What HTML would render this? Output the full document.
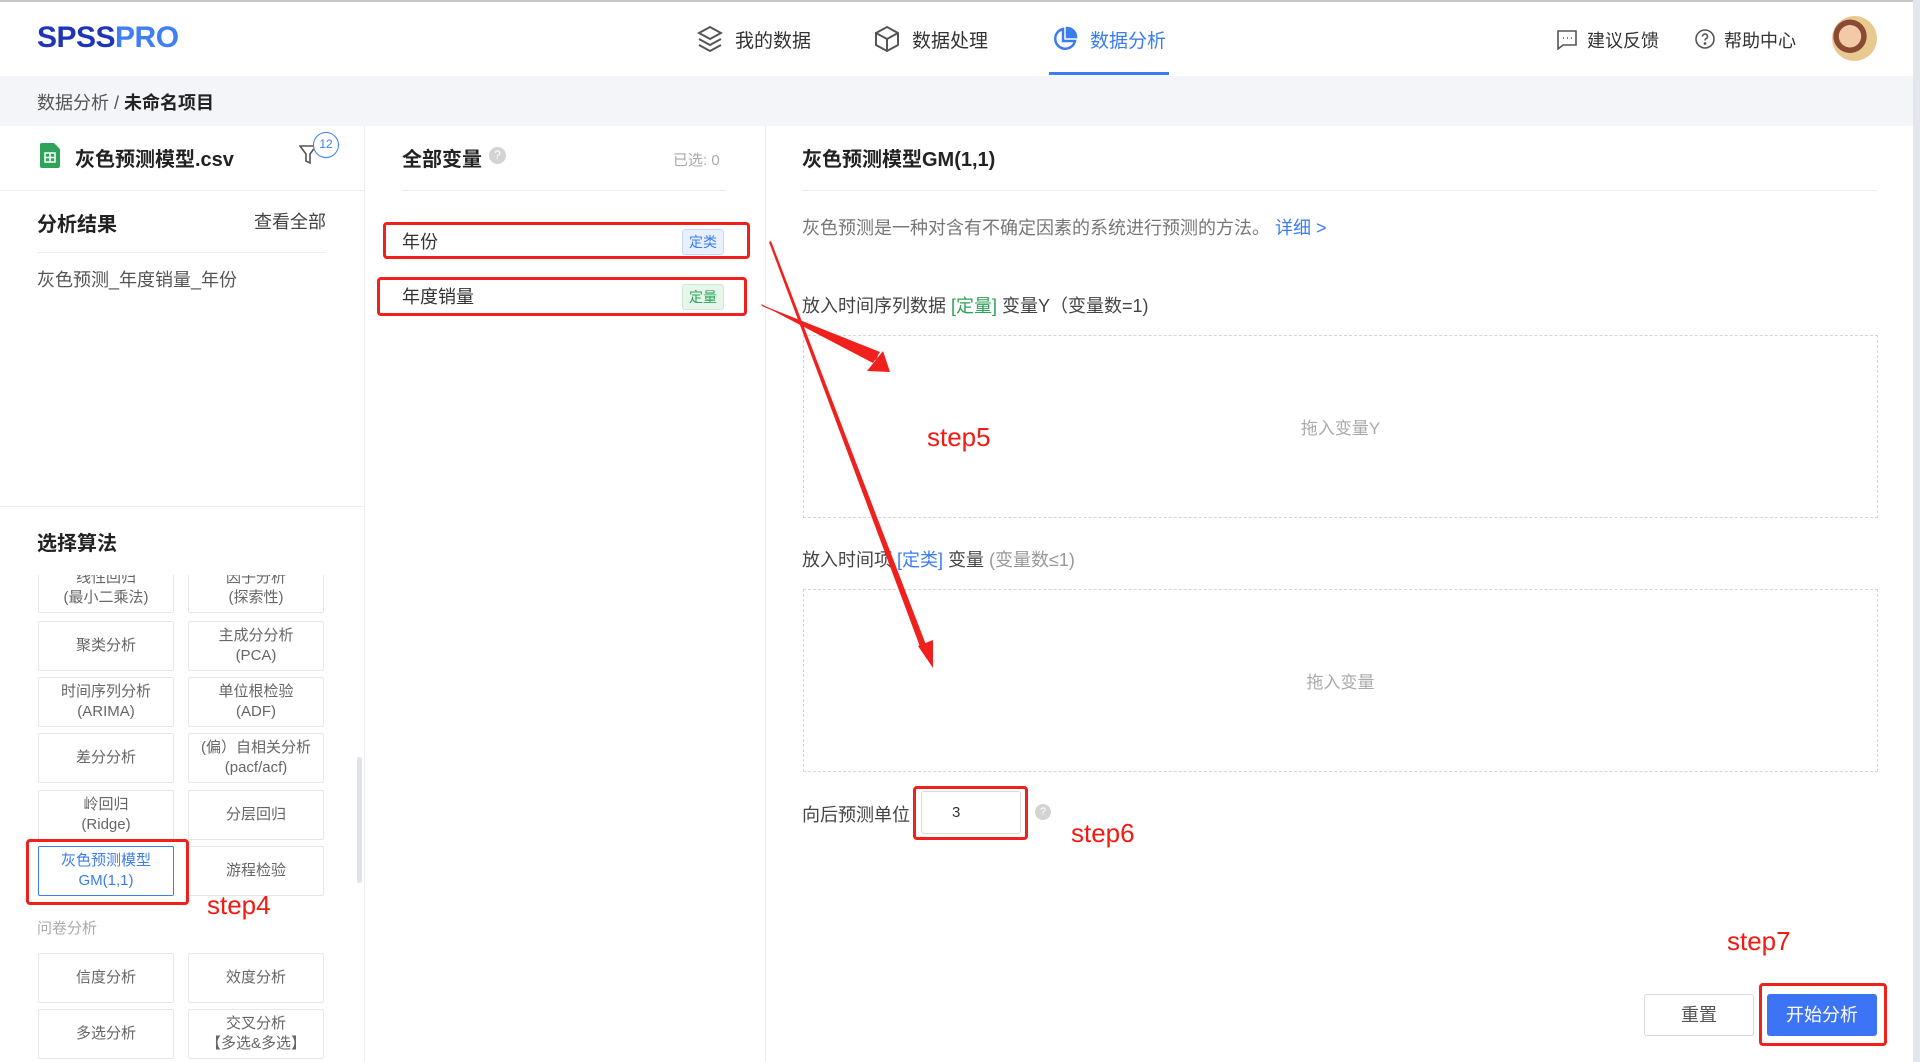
<!DOCTYPE html>
<html><head><meta charset="utf-8"><style>
*{margin:0;padding:0;box-sizing:border-box}
body{width:1920px;height:1062px;overflow:hidden;background:#fff;font-family:"Liberation Sans","Noto Sans CJK SC",sans-serif;color:#333;position:relative}
.a{position:absolute;white-space:nowrap}
.b{font-weight:bold;color:#222}
.cell{position:absolute;width:136px;height:50px;border:1px solid #e4e6ea;border-radius:2px;font-size:15px;color:#666;display:flex;align-items:center;justify-content:center;text-align:center;line-height:20px;background:#fff}
.red{position:absolute;border:3px solid #f0201c;border-radius:4px}
.step{position:absolute;color:#f21b14;font-size:26px;font-family:"Liberation Sans",sans-serif}
.dash{position:absolute;border:1px dashed #d4d6da;display:flex;align-items:center;justify-content:center;color:#aaa;font-size:17px}
.tag{position:absolute;font-size:14px;padding:2px 6px;border-radius:3px}
</style></head><body>
<div class="a" style="left:0;top:0;width:1920px;height:2px;background:#c8c8c8"></div>
<div class="a" style="left:37px;top:21px;font-size:30px;font-weight:bold;color:#1f35b8;letter-spacing:-0.5px">SPSS<span style="color:#3f7ef5">PRO</span></div>
<!-- nav -->
<svg class="a" style="left:697px;top:25px" width="26" height="28" viewBox="0 0 26 28" fill="none" stroke="#555" stroke-width="2"><path d="M13 2L24 8L13 14L2 8Z"/><path d="M2 14L13 20L24 14"/><path d="M2 20L13 26L24 20"/></svg>
<div class="a" style="left:735px;top:26px;font-size:19px;color:#333">我的数据</div>
<svg class="a" style="left:874px;top:25px" width="26" height="28" viewBox="0 0 26 28" fill="none" stroke="#555" stroke-width="2"><path d="M13 2L24 8V20L13 26L2 20V8Z"/><path d="M2 8L13 14L24 8M13 14V26"/></svg>
<div class="a" style="left:912px;top:26px;font-size:19px;color:#333">数据处理</div>
<svg class="a" style="left:1052px;top:26px" width="26" height="26" viewBox="0 0 26 26" fill="none" stroke="#3b7cf0" stroke-width="2.5"><path d="M11 3A10 10 0 1 0 23 15H11Z"/><path d="M15 2V11H24A9 9 0 0 0 15 2Z" fill="#3b7cf0"/></svg>
<div class="a" style="left:1090px;top:26px;font-size:19px;color:#3b7cf0">数据分析</div>
<div class="a" style="left:1049px;top:72px;width:120px;height:3px;background:#3b7cf0"></div>
<svg class="a" style="left:1557px;top:30px" width="20" height="20" viewBox="0 0 20 20" fill="none" stroke="#555" stroke-width="1.6"><path d="M1 1H19V15H6L1 19Z"/><path d="M6 8h1M10 8h1M14 8h1"/></svg>
<div class="a" style="left:1587px;top:27px;font-size:18px;color:#333">建议反馈</div>
<svg class="a" style="left:1695px;top:29px" width="20" height="20" viewBox="0 0 20 20" fill="none" stroke="#555" stroke-width="1.6"><circle cx="10" cy="10" r="9"/><path d="M7.5 7.5a2.5 2.5 0 1 1 3.5 2.3c-.8.4-1 .9-1 1.7"/><circle cx="10" cy="14.5" r=".6" fill="#555"/></svg>
<div class="a" style="left:1724px;top:27px;font-size:18px;color:#333">帮助中心</div>
<div class="a" style="left:1832px;top:16px;width:45px;height:45px;border-radius:50%;background:radial-gradient(circle at 40% 45%,#f3c9a8 0 30%,#8a4a35 31% 45%,#e8c98f 46%)"></div>
<div class="a" style="left:1913px;top:0;width:7px;height:1062px;background:#e3e6ec"></div>
<!-- breadcrumb -->
<div class="a" style="left:0;top:76px;width:1913px;height:50px;background:#f4f5f8"></div>
<div class="a" style="left:37px;top:89px;font-size:18px;color:#555">数据分析 / <b style="color:#222">未命名项目</b></div>
<!-- panels -->
<div class="a" style="left:364px;top:126px;width:1px;height:936px;background:#eceef1"></div>
<div class="a" style="left:765px;top:126px;width:1px;height:936px;background:#eceef1"></div>
<!-- left -->
<svg class="a" style="left:40px;top:143px" width="20" height="25" viewBox="0 0 20 25"><path d="M0 2Q0 0 2 0H14L20 6V23Q20 25 18 25H2Q0 25 0 23Z" fill="#2fa35a"/><rect x="5" y="10" width="10" height="9" fill="none" stroke="#fff" stroke-width="1.5"/><path d="M5 14.5H15M10 10V19" stroke="#fff" stroke-width="1.5"/></svg>
<div class="a b" style="left:75px;top:143px;font-size:20px">灰色预测模型.csv</div>
<svg class="a" style="left:299px;top:145px" width="18" height="20" viewBox="0 0 18 20" fill="none" stroke="#555" stroke-width="1.6"><path d="M1 1H17L11 9V18L7 16V9Z"/></svg>
<div class="a" style="left:313px;top:132px;width:26px;height:26px;border:1px solid #3b7cf0;border-radius:50%;background:#fff;color:#3b7cf0;font-size:12px;text-align:center;line-height:23px">12</div>
<div class="a" style="left:0;top:190px;width:364px;height:1px;background:#eceef1"></div>
<div class="a b" style="left:37px;top:208px;font-size:20px">分析结果</div>
<div class="a" style="left:254px;top:208px;font-size:18px;color:#444">查看全部</div>
<div class="a" style="left:37px;top:252px;width:289px;height:1px;background:#eceef1"></div>
<div class="a" style="left:37px;top:266px;font-size:18px;color:#555">灰色预测_年度销量_年份</div>
<div class="a" style="left:0;top:506px;width:364px;height:1px;background:#eceef1"></div>
<div class="a b" style="left:37px;top:527px;font-size:20px">选择算法</div>
<div class="a" style="left:0;top:575px;width:364px;height:487px;overflow:hidden">
<div class="cell" style="left:38px;top:-12px">线性回归<br>(最小二乘法)</div>
<div class="cell" style="left:188px;top:-12px">因子分析<br>(探索性)</div>
<div class="cell" style="left:38px;top:46px">聚类分析</div>
<div class="cell" style="left:188px;top:46px">主成分分析<br>(PCA)</div>
<div class="cell" style="left:38px;top:102px">时间序列分析<br>(ARIMA)</div>
<div class="cell" style="left:188px;top:102px">单位根检验<br>(ADF)</div>
<div class="cell" style="left:38px;top:158px">差分分析</div>
<div class="cell" style="left:188px;top:158px">(偏）自相关分析<br>(pacf/acf)</div>
<div class="cell" style="left:38px;top:215px">岭回归<br>(Ridge)</div>
<div class="cell" style="left:188px;top:215px">分层回归</div>
<div class="cell" style="left:38px;top:271px;border-color:#3b7cf0;color:#3b7cf0">灰色预测模型<br>GM(1,1)</div>
<div class="cell" style="left:188px;top:271px">游程检验</div>
<div class="a" style="left:37px;top:342px;font-size:15px;color:#aaa">问卷分析</div>
<div class="cell" style="left:38px;top:378px">信度分析</div>
<div class="cell" style="left:188px;top:378px">效度分析</div>
<div class="cell" style="left:38px;top:434px">多选分析</div>
<div class="cell" style="left:188px;top:434px">交叉分析<br>【多选&amp;多选】</div>
</div>
<div class="a" style="left:357px;top:757px;width:5px;height:126px;background:#dfe2e8;border-radius:3px"></div>
<div class="red" style="left:26px;top:839px;width:163px;height:66px"></div>
<div class="step" style="left:207px;top:890px">step4</div>
<!-- middle -->
<div class="a b" style="left:402px;top:143px;font-size:20px">全部变量</div>
<div class="a" style="left:489px;top:147px;width:17px;height:17px;border-radius:50%;background:#d3d3d3;color:#fff;font-size:12px;text-align:center;line-height:17px">?</div>
<div class="a" style="left:673px;top:149px;font-size:15px;color:#aaa">已选: 0</div>
<div class="a" style="left:402px;top:190px;width:324px;height:1px;background:#eceef1"></div>
<div class="red" style="left:383px;top:222px;width:367px;height:37px"></div>
<div class="a" style="left:402px;top:228px;font-size:18px;color:#333">年份</div>
<div class="tag" style="left:682px;top:229px;background:#e8f0fe;border:1px solid #c9daf8;color:#3b7cf0">定类</div>
<div class="red" style="left:377px;top:277px;width:370px;height:39px"></div>
<div class="a" style="left:402px;top:283px;font-size:18px;color:#333">年度销量</div>
<div class="tag" style="left:682px;top:284px;background:#e6f6ea;border:1px solid #c8ebd1;color:#2fa35a">定量</div>
<!-- right -->
<div class="a b" style="left:802px;top:143px;font-size:20px">灰色预测模型GM(1,1)</div>
<div class="a" style="left:802px;top:190px;width:1075px;height:1px;background:#eceef1"></div>
<div class="a" style="left:802px;top:214px;font-size:18px;color:#777">灰色预测是一种对含有不确定因素的系统进行预测的方法。 <span style="color:#3b7cf0">详细 &gt;</span></div>
<div class="a" style="left:802px;top:292px;font-size:18px;color:#444">放入时间序列数据 <span style="color:#2fa35a">[定量]</span> 变量Y（变量数=1)</div>
<div class="dash" style="left:803px;top:335px;width:1075px;height:183px">拖入变量Y</div>
<div class="a" style="left:802px;top:546px;font-size:18px;color:#444">放入时间项 <span style="color:#3b7cf0">[定类]</span> 变量 <span style="color:#999">(变量数≤1)</span></div>
<div class="dash" style="left:803px;top:589px;width:1075px;height:183px">拖入变量</div>
<div class="a" style="left:802px;top:801px;font-size:18px;color:#444">向后预测单位</div>
<div class="a" style="left:921px;top:791px;width:100px;height:43px;border:1px solid #d9d9d9;border-radius:3px;font-size:15px;line-height:41px;padding-left:30px;color:#333">3</div>
<div class="red" style="left:913px;top:786px;width:115px;height:54px"></div>
<div class="a" style="left:1035px;top:804px;width:16px;height:16px;border-radius:50%;background:#d3d3d3;color:#fff;font-size:11px;text-align:center;line-height:16px">?</div>
<div class="step" style="left:1071px;top:818px">step6</div>
<div class="step" style="left:927px;top:422px">step5</div>
<div class="step" style="left:1727px;top:926px">step7</div>
<div class="a" style="left:1644px;top:994px;width:110px;height:42px;border:1px solid #d9d9d9;border-radius:3px;font-size:18px;color:#555;text-align:center;line-height:40px">重置</div>
<div class="a" style="left:1767px;top:994px;width:110px;height:42px;background:#3d74f5;border-radius:3px;font-size:18px;color:#fff;text-align:center;line-height:42px">开始分析</div>
<div class="red" style="left:1759px;top:983px;width:128px;height:63px"></div>
<svg class="a" style="left:0;top:0" width="1920" height="1062">
<polygon points="761,304 876,360 878,356 762,306" fill="#f0201c"/>
<polygon points="762,305 873,363 880,352" fill="#f0201c"/>
<polygon points="890,372 867,371 883,351" fill="#f0201c"/>
<polygon points="769,242 771,241 928,650 922,652" fill="#f0201c"/>
<polygon points="933,668 918,646 933,640" fill="#f0201c"/>
</svg>
</body></html>
